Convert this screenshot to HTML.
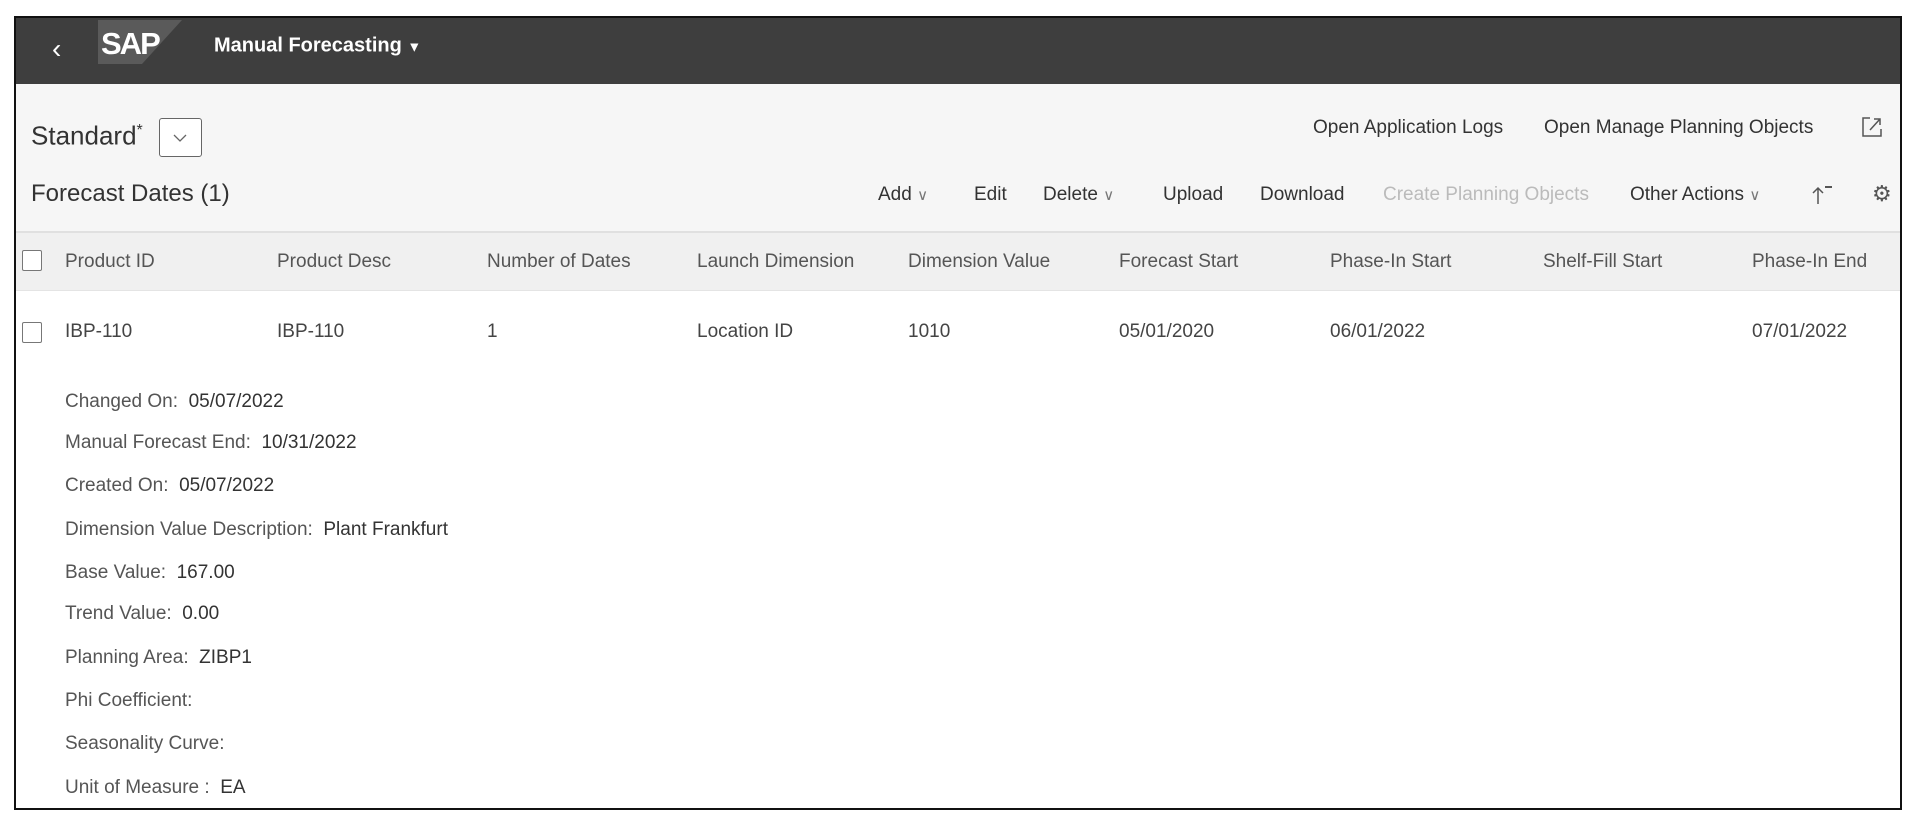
<!DOCTYPE html>
<html><head><meta charset="utf-8"><style>
*{margin:0;padding:0;box-sizing:border-box}
body{width:1917px;height:827px;background:#fff;position:relative;overflow:hidden;font-family:"Liberation Sans",sans-serif;color:#444}
#frame{position:absolute;left:14px;top:16px;width:1888px;height:794px;border:2px solid #111;background:#fff;overflow:hidden}
.a{position:absolute;white-space:nowrap;transform:translateY(-50%)}
#hdr{position:absolute;left:0;top:0;width:100%;height:66px;background:#3e3e3e}
#light{position:absolute;left:0;top:66px;width:100%;height:147px;background:#f6f6f6}
#th{position:absolute;left:0;top:213px;width:100%;height:60px;background:#f0f0f0;border-top:2px solid #e0e0e0;border-bottom:1px solid #e4e4e4}
.t{font-size:19px;color:#555}
.d{font-size:19px;color:#444}
.cb{position:absolute;width:20px;height:21px;border:1.5px solid #777;border-radius:2px;background:#fff}
.tb{font-size:19px;color:#333}
</style></head><body>
<div id="frame">
 <div id="hdr">
  <div class="a" style="left:36px;top:31px;color:#fff;font-size:28px">&#8249;</div>
  <svg style="position:absolute;left:82px;top:2px" width="84" height="44"><polygon points="0,0 84,0 44,44 0,44" fill="#5a5a5a"/><text x="3" y="34" font-family="Liberation Sans" font-weight="bold" font-size="31" fill="#fff" letter-spacing="-2">SAP</text></svg>
  <div class="a" style="left:198px;top:28px;color:#fff;font-size:20px;font-weight:bold">Manual Forecasting <span style="font-size:14px">&#9660;</span></div>
 </div>
 <div id="light"></div>
 <div class="a" style="left:15px;top:118px;font-size:26px;color:#333">Standard<sup style="font-size:16px">*</sup></div>
 <div style="position:absolute;left:143px;top:100px;width:43px;height:39px;border:1.5px solid #666;border-radius:3px;background:#fff"><svg width="40" height="36"><path d="M14 16 L20 22 L26 16" stroke="#666" fill="none" stroke-width="1.3"/></svg></div>
 <div class="a t" style="left:1297px;top:110px;color:#333">Open Application Logs</div>
 <div class="a t" style="left:1528px;top:110px;color:#333">Open Manage Planning Objects</div>
 <svg style="position:absolute;left:1844px;top:96px" width="26" height="26"><path d="M10 4H3V22H21V15" stroke="#555" fill="none" stroke-width="1.5"/><path d="M10 16 L20 5 M14 5H20V11" stroke="#555" fill="none" stroke-width="1.5"/></svg>
 <div class="a" style="left:15px;top:176px;font-size:24px;color:#333">Forecast Dates (1)</div>
 <div class="a tb" style="left:862px;top:177px">Add <span style="color:#777;font-size:15px">&#8744;</span></div>
 <div class="a tb" style="left:958px;top:177px">Edit</div>
 <div class="a tb" style="left:1027px;top:177px">Delete <span style="color:#777;font-size:15px">&#8744;</span></div>
 <div class="a tb" style="left:1147px;top:177px">Upload</div>
 <div class="a tb" style="left:1244px;top:177px">Download</div>
 <div class="a tb" style="left:1367px;top:177px;color:#bbb">Create Planning Objects</div>
 <div class="a tb" style="left:1614px;top:177px">Other Actions <span style="color:#777;font-size:15px">&#8744;</span></div>
 <svg style="position:absolute;left:1794px;top:166px" width="24" height="22"><path d="M8 20V4 M3 9 L8 4 L13 9" stroke="#555" fill="none" stroke-width="1.5"/><path d="M15 3H22" stroke="#555" stroke-width="2"/></svg>
 <div class="a" style="left:1856px;top:176px;font-size:22px;color:#555">&#9881;</div>
 <div id="th"></div>
 <div class="cb" style="left:6px;top:232px"></div>
 <div class="a t" style="left:49px;top:244px">Product ID</div>
 <div class="a t" style="left:261px;top:244px">Product Desc</div>
 <div class="a t" style="left:471px;top:244px">Number of Dates</div>
 <div class="a t" style="left:681px;top:244px">Launch Dimension</div>
 <div class="a t" style="left:892px;top:244px">Dimension Value</div>
 <div class="a t" style="left:1103px;top:244px">Forecast Start</div>
 <div class="a t" style="left:1314px;top:244px">Phase-In Start</div>
 <div class="a t" style="left:1527px;top:244px">Shelf-Fill Start</div>
 <div class="a t" style="left:1736px;top:244px">Phase-In End</div>
 <div class="cb" style="left:6px;top:304px"></div>
 <div class="a d" style="left:49px;top:314px">IBP-110</div>
 <div class="a d" style="left:261px;top:314px">IBP-110</div>
 <div class="a d" style="left:471px;top:314px">1</div>
 <div class="a d" style="left:681px;top:314px">Location ID</div>
 <div class="a d" style="left:892px;top:314px">1010</div>
 <div class="a d" style="left:1103px;top:314px">05/01/2020</div>
 <div class="a d" style="left:1314px;top:314px">06/01/2022</div>
 <div class="a d" style="left:1736px;top:314px">07/01/2022</div>
 <div class="a t" style="left:49px;top:384px">Changed On:&nbsp; <span style="color:#333">05/07/2022</span></div>
 <div class="a t" style="left:49px;top:425px">Manual Forecast End:&nbsp; <span style="color:#333">10/31/2022</span></div>
 <div class="a t" style="left:49px;top:468px">Created On:&nbsp; <span style="color:#333">05/07/2022</span></div>
 <div class="a t" style="left:49px;top:512px">Dimension Value Description:&nbsp; <span style="color:#333">Plant Frankfurt</span></div>
 <div class="a t" style="left:49px;top:555px">Base Value:&nbsp; <span style="color:#333">167.00</span></div>
 <div class="a t" style="left:49px;top:596px">Trend Value:&nbsp; <span style="color:#333">0.00</span></div>
 <div class="a t" style="left:49px;top:640px">Planning Area:&nbsp; <span style="color:#333">ZIBP1</span></div>
 <div class="a t" style="left:49px;top:683px">Phi Coefficient:</div>
 <div class="a t" style="left:49px;top:726px">Seasonality Curve:</div>
 <div class="a t" style="left:49px;top:770px">Unit of Measure :&nbsp; <span style="color:#333">EA</span></div>
</div>
</body></html>
